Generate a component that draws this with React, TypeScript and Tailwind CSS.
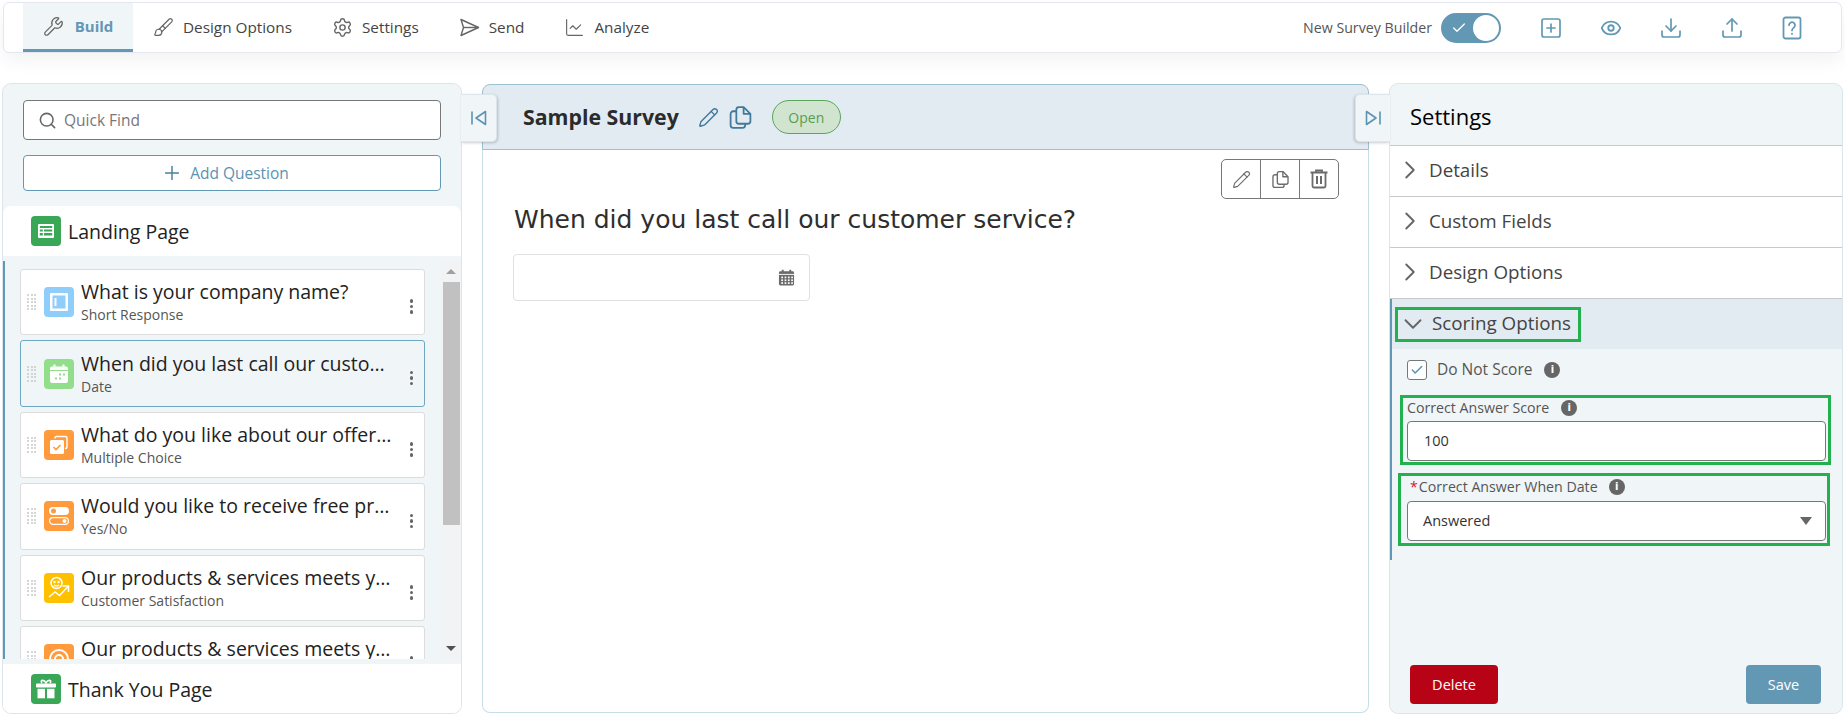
import React from 'react';
import { Wrench, Brush, Settings, LineChart, Search, Plus, SquarePlus, Eye, Download, Upload, Pencil, ChevronRight, ChevronDown, Check } from 'lucide-react';

const SendIcon = () => (
  <svg width="21" height="21" viewBox="0 0 21 21" fill="none" stroke="#666" strokeWidth="1.4" strokeLinejoin="round">
    <path d="M2 2.5 19.5 10.5 2 18.5 4.5 10.5Z" />
    <path d="M4.5 10.5H19.5" />
  </svg>
);

const HelpIcon = () => (
  <svg width="22" height="24" viewBox="0 0 22 24" fill="none" stroke="#6398b4" strokeWidth="1.8" strokeLinecap="round">
    <rect x="2.5" y="1.5" width="17" height="21" rx="2" />
    <path d="M8 9.2a3 3 0 1 1 4.8 2.4c-1.1.8-1.8 1.4-1.8 2.8" />
    <path d="M11 17.6v.4" />
  </svg>
);

const CollapseIcon = ({ flip }: { flip?: boolean }) => (
  <svg width="18" height="18" viewBox="0 0 18 18" fill="none" stroke="#5b93b1" strokeWidth="1.6" strokeLinejoin="round" className={flip ? 'scale-x-[-1]' : ''}>
    <path d="M2 2.5v13" />
    <path d="M15.5 2.5v13L6 9Z" />
  </svg>
);

const CopyIcon = ({ color, size }: { color: string; size: number }) => (
  <svg width={size} height={size} viewBox="0 0 24 24" fill="none" stroke={color} strokeWidth="1.7" strokeLinejoin="round">
    <path d="M8 6H5a2.5 2.5 0 0 0-2.5 2.5v11A2.5 2.5 0 0 0 5 22h9a2.5 2.5 0 0 0 2.5-2.5V18" />
    <path d="M8 4.5A2.5 2.5 0 0 1 10.5 2H15l6.5 6.5v7a2.5 2.5 0 0 1-2.5 2.5h-8.500A2.500 2.500 0 0 1 8 15.500Z" />
    <path d="M15 2v6.500h6.500" />
  </svg>
);

const TrashIcon = () => (
  <svg width="20" height="20" viewBox="0 0 20 20" fill="none" stroke="#6b6b6b" strokeWidth="1.8">
    <path d="M1.500 3.500h17" strokeWidth="2" />
    <path d="M7 3V1.500h6V3" />
    <path d="M3.500 4v13a1.500 1.500 0 0 0 1.500 1.500h10a1.500 1.500 0 0 0 1.500-1.500V4" />
    <path d="M8 7v8M12 7v8" strokeWidth="2" />
  </svg>
);

const CalendarFill = ({ size, color, hole }: { size: number; color: string; hole: string }) => (
  <svg width={size} height={size} viewBox="0 0 18 18">
    <rect x="1" y="2.500" width="16" height="15" rx="1.500" fill={color} />
    <rect x="4" y="0.800" width="2" height="3" fill={color} />
    <rect x="12" y="0.800" width="2" height="3" fill={color} />
    <rect x="1" y="5.200" width="16" height="1" fill={hole} />
    {[8, 11, 14].map(y => [3.5, 7, 10.5, 14].map(x => <rect key={`${x}-${y}`} x={x} y={y} width="1.800" height="1.800" fill={hole} />))}
  </svg>
);

const CalendarTile = () => (
  <svg width="20" height="20" viewBox="0 0 20 20">
    <rect x="1" y="2.500" width="18" height="16.500" rx="2" fill="white" />
    <rect x="4.500" y="0.500" width="2" height="3.500" fill="white" />
    <rect x="13.500" y="0.500" width="2" height="3.500" fill="white" />
    <rect x="1" y="6" width="18" height="1" fill="#92de8b" />
    <rect x="10" y="9.500" width="2" height="2" fill="#92de8b" />
    <rect x="14" y="9.500" width="2" height="2" fill="#92de8b" />
    <rect x="6" y="13.500" width="2" height="2" fill="#92de8b" />
    <rect x="10" y="13.500" width="2" height="2" fill="#92de8b" />
  </svg>
);

const Tile = ({ color, children }: { color: string; children: React.ReactNode }) => (
  <div className={`flex h-[30px] w-[30px] shrink-0 items-center justify-center rounded-[4px] ${color}`}>{children}</div>
);

const ShortIcon = () => (
  <svg width="20" height="20" viewBox="0 0 20 20">
    <rect x="1" y="1" width="18" height="18" rx="1" fill="white" />
    <rect x="3.500" y="3.500" width="13" height="13" fill="#8fcdfb" />
    <rect x="5.500" y="6" width="2" height="8" fill="white" />
  </svg>
);

const ChoiceIcon = () => (
  <svg width="20" height="20" viewBox="0 0 20 20" fill="none" stroke="white" strokeWidth="1.400">
    <path d="M6 3.500V3a1.500 1.500 0 0 1 1.500-1.500h9A1.500 1.500 0 0 1 18 3v9a1.500 1.500 0 0 1-1.500 1.500H16" />
    <rect x="1" y="5" width="14" height="14" rx="1.500" fill="white" stroke="none" />
    <path d="M4.500 12l2.500 2.500 4.500-4.500" stroke="#ff9a3d" strokeWidth="1.600" />
  </svg>
);

const ToggleIcon = () => (
  <svg width="22" height="20" viewBox="0 0 22 20">
    <rect x="1" y="1" width="20" height="8" rx="4" fill="white" />
    <circle cx="5.500" cy="5" r="2.500" fill="#ff9a3d" />
    <rect x="1.600" y="11.600" width="18.800" height="6.800" rx="3.400" fill="none" stroke="white" strokeWidth="1.200" />
    <circle cx="16.500" cy="15" r="2" fill="white" />
  </svg>
);

const SmileIcon = () => (
  <svg width="22" height="24" viewBox="0 0 22 24" fill="none" stroke="white" strokeWidth="1.500">
    <circle cx="8.500" cy="7" r="5.500" />
    <circle cx="6.500" cy="6" r="0.500" fill="white" />
    <circle cx="10.500" cy="6" r="0.500" fill="white" />
    <path d="M6 9c1.500 1.200 3.500 1.200 5 0" />
    <path d="M1 21l6-5 4.500 3.500L20 10.500" />
    <path d="M14.500 10h6v6" />
  </svg>
);

const TargetIcon = () => (
  <svg width="22" height="22" viewBox="0 0 22 22" fill="none" stroke="white" strokeWidth="2">
    <circle cx="11" cy="11" r="9" />
    <circle cx="11" cy="11" r="4" />
  </svg>
);

const TableIcon = () => (
  <svg width="20" height="20" viewBox="0 0 20 20">
    <rect x="2" y="3" width="16" height="14" rx="1" fill="white" />
    <rect x="3.800" y="5" width="12.400" height="2" fill="#3aa757" />
    <rect x="3.800" y="8.500" width="3" height="2" fill="#3aa757" />
    <rect x="8" y="8.500" width="8.200" height="2" fill="#3aa757" />
    <rect x="3.800" y="12" width="3" height="2.500" fill="#3aa757" />
    <rect x="8" y="12" width="8.200" height="2.500" fill="#3aa757" />
  </svg>
);

const GiftIcon = () => (
  <svg width="22" height="22" viewBox="0 0 22 22">
    <path d="M7 5c-2.500-3 2-4 4 0 2-4 6.500-3 4 0" fill="none" stroke="white" strokeWidth="1.600" />
    <rect x="1" y="5.500" width="20" height="4" rx="0.800" fill="white" />
    <rect x="2.500" y="10.800" width="7.500" height="9.500" fill="white" />
    <rect x="12" y="10.800" width="7.500" height="9.500" fill="white" />
  </svg>
);

const Info = () => (
  <span className="flex h-[16px] w-[16px] shrink-0 items-center justify-center rounded-full bg-[#666] font-['DejaVu_Sans',sans-serif] text-[10px] font-bold leading-none text-white">i</span>
);

const tabs = [
  { label: 'Design Options', icon: <Brush size={21} strokeWidth={1.4} color="#666" /> },
  { label: 'Settings', icon: <Settings size={21} strokeWidth={1.6} color="#666" /> },
  { label: 'Send', icon: <SendIcon /> },
  { label: 'Analyze', icon: <LineChart size={21} strokeWidth={1.3} color="#666" /> },
];

const questions = [
  { title: 'What is your company name?', sub: 'Short Response', tile: <Tile color="bg-[#8fcdfb]"><ShortIcon /></Tile> },
  { title: 'When did you last call our customer service?', sub: 'Date', active: true, tile: <Tile color="bg-[#92de8b]"><CalendarTile /></Tile> },
  { title: 'What do you like about our offerings?', sub: 'Multiple Choice', tile: <Tile color="bg-[#ff9a3d]"><ChoiceIcon /></Tile> },
  { title: 'Would you like to receive free products?', sub: 'Yes/No', tile: <Tile color="bg-[#ff9a3d]"><ToggleIcon /></Tile> },
  { title: 'Our products & services meets your needs', sub: 'Customer Satisfaction', tile: <Tile color="bg-[#ffc000]"><SmileIcon /></Tile> },
  { title: 'Our products & services meets your expectations', sub: 'Net Promoter Score', tile: <Tile color="bg-[#ff9a3d]"><TargetIcon /></Tile> },
];

const Grip = () => (
  <div className="grid w-[9px] shrink-0 grid-cols-3 gap-[1.500px]">
    {Array.from({ length: 15 }).map((_, i) => (
      <span key={i} className="h-[2px] w-[2px] rounded-full bg-[#c8c8c8]" />
    ))}
  </div>
);

const Dots = () => (
  <div className="mt-[9px] flex w-[25px] shrink-0 flex-col items-center gap-[2px]">
    <span className="h-[3.500px] w-[3.500px] rounded-full bg-[#666]" />
    <span className="h-[3.500px] w-[3.500px] rounded-full bg-[#666]" />
    <span className="h-[3.500px] w-[3.500px] rounded-full bg-[#666]" />
  </div>
);

const Accordion = ({ label }: { label: string }) => (
  <div className="flex h-[51px] items-center border-b border-[#c9c9c9] bg-white pb-[2px] pl-[5px] text-[18.800px] text-[#444]">
    <ChevronRight size={30} strokeWidth={1.5} color="#666" />
    <span className="ml-[4px]">{label}</span>
  </div>
);

export default function App() {
  return (
    <div className="h-[717px] w-full overflow-hidden bg-white font-['Open_Sans',sans-serif]">
      <div className="mx-[3px] mt-[2px] flex h-[51px] items-center rounded-[6px] border border-[#e4e7f0] bg-white pl-[19px] pr-[38px] shadow-[0_8px_18px_rgba(0,0,0,0.05)]">
        <div className="flex h-full w-[110px] items-center justify-center gap-[11px] border-b-[3px] border-[#6398b4] bg-[#f0f5f8]">
          <Wrench size={21} strokeWidth={1.4} color="#666" />
          <span className="text-[15px] font-bold text-[#6398b4]">Build</span>
        </div>
        {tabs.map(t => (
          <div key={t.label} className="flex h-full items-center gap-[9px] px-[20px] text-[15.300px] text-[#444]">
            {t.icon}
            <span>{t.label}</span>
          </div>
        ))}
        <div className="ml-auto flex items-center">
          <span className="text-[14.200px] text-[#555]">New Survey Builder</span>
          <div className="ml-[9px] flex h-[30px] w-[60px] items-center justify-between rounded-full border-2 border-[#6398b4] bg-[#6398b4] pl-[8px]">
            <Check size={16} strokeWidth={2} color="white" />
            <span className="h-[26px] w-[26px] rounded-full bg-white" />
          </div>
          <div className="ml-[38px] flex items-center gap-[37px]">
            <SquarePlus size={24} strokeWidth={1.7} color="#6398b4" />
            <Eye size={22} strokeWidth={2} color="#6398b4" />
            <Download size={24} strokeWidth={1.7} color="#6398b4" />
            <Upload size={24} strokeWidth={1.7} color="#6398b4" />
            <HelpIcon />
          </div>
        </div>
      </div>

      <div className="mt-[31px] flex h-[629px] gap-[21px] px-[3px]">
        {/* question list */}
        <div className="relative flex w-[458px] shrink-0 flex-col rounded-[8px] bg-[#f0f5f8] ring-1 ring-[#dde5ec]">
          <div className="px-[20px] pt-[16px]">
            <div className="flex h-[40px] items-center gap-[7px] rounded-[4px] border border-[#777] bg-white pl-[14px] text-[15.500px] text-[#777]">
              <Search size={19} strokeWidth={2} color="#666" />
              <span className="pt-[2px]">Quick Find</span>
            </div>
            <div className="mt-[15px] flex h-[36px] items-center justify-center gap-[7px] rounded-[4px] border border-[#6398b4] bg-white pr-[14px] text-[15.500px] text-[#5b93b1]">
              <Plus size={22} strokeWidth={1.6} color="#4a809e" />
              <span className="pt-[2px]">Add Question</span>
            </div>
          </div>
          <div className="mt-[15px] flex h-[50px] shrink-0 items-center gap-[7px] rounded-t-[8px] bg-white pl-[28px] text-[19.500px] text-[#222]">
            <Tile color="bg-[#3aa757]"><TableIcon /></Tile>
            <span className="pt-[2px]">Landing Page</span>
          </div>
          <div className="mt-[5px] flex h-[398px] border-l-2 border-[#6398b4]">
            <div className="flex min-w-0 flex-1 flex-col gap-[5px] overflow-hidden pl-[15px] pr-[16px] pt-[8px]">
              {questions.map(q => (
                <div
                  key={q.title}
                  className={`flex h-[66.400px] shrink-0 items-center rounded-[3px] border pl-[6px] ${q.active ? 'border-[#6fa6c2] bg-[#f0f5f8]' : 'border-[#dcdcdc] bg-white'}`}
                >
                  <Grip />
                  <div className="ml-[8px]">{q.tile}</div>
                  <div className="ml-[7px] min-w-0 flex-1 pr-[3px]">
                    <div className="truncate text-[19.500px] leading-[26px] text-[#222]">{q.title}</div>
                    <div className="text-[14px] leading-[20px] text-[#555]">{q.sub}</div>
                  </div>
                  <Dots />
                </div>
              ))}
            </div>
            <div className="flex w-[20px] shrink-0 flex-col items-center bg-[#f1f3f5]">
              <div className="flex h-[21px] items-center justify-center">
                <span className="h-0 w-0 border-x-[5px] border-b-[5px] border-x-transparent border-b-[#a0a0a0]" />
              </div>
              <div className="h-[243px] w-[17px] bg-[#c1c1c1]" />
              <div className="mt-auto flex h-[21px] items-center justify-center">
                <span className="h-0 w-0 border-x-[5px] border-t-[5px] border-x-transparent border-t-[#505050]" />
              </div>
            </div>
          </div>
          <div className="mt-auto flex h-[49px] items-center gap-[7px] rounded-b-[8px] bg-white pl-[28px] text-[19.500px] text-[#222]">
            <Tile color="bg-[#3aa757]"><GiftIcon /></Tile>
            <span className="pt-[2px]">Thank You Page</span>
          </div>
          <div className="absolute left-[458px] top-[10px] flex h-[48px] w-[36px] items-center justify-center rounded-r-[5px] border border-l-0 border-[#dde5ec] bg-[#f0f5f8] shadow-[1px_1px_3px_rgba(0,0,0,0.2)]">
            <CollapseIcon />
          </div>
        </div>

        {/* question preview */}
        <div className="flex w-[887px] shrink-0 flex-col">
          <div className="flex h-[66px] shrink-0 items-center rounded-t-[8px] border border-[#9dc0d3] bg-[#e2ebf1] pl-[40px]">
            <span className="text-[21.300px] font-bold text-[#2b2b2b]">Sample Survey</span>
            <Pencil size={21} strokeWidth={1.6} color="#3f7a9a" className="ml-[19px]" />
            <div className="ml-[9px]"><CopyIcon color="#3f7a9a" size={25} /></div>
            <span className="ml-[19px] flex h-[34px] w-[69px] items-center justify-center rounded-full border border-[#5aa65a] bg-[#d0e4d0] text-[14px] text-[#5a9c50]">Open</span>
          </div>
          <div className="flex-1 rounded-b-[8px] border-x border-b border-[#c7dde8] bg-white pl-[30px] pr-[29px] pt-[9px]">
            <div className="flex justify-end">
              <div className="flex h-[40px] divide-x divide-[#777] rounded-[5px] border border-[#777]">
                <div className="flex w-[39px] items-center justify-center"><Pencil size={19} strokeWidth={1.4} color="#6b6b6b" /></div>
                <div className="flex w-[39px] items-center justify-center"><CopyIcon color="#6b6b6b" size={19} /></div>
                <div className="flex w-[38px] items-center justify-center"><TrashIcon /></div>
              </div>
            </div>
            <div className="ml-[1px] mt-[5px] font-['DejaVu_Sans',sans-serif] text-[25px] leading-[32px] text-[#2e2e2e]">When did you last call our customer service?</div>
            <div className="mt-[18px] flex h-[47px] w-[297px] items-center justify-end rounded-[4px] border border-[#e0e0e0] pr-[14px]">
              <CalendarFill size={17} color="#6b6b6b" hole="white" />
            </div>
          </div>
        </div>

        {/* settings */}
        <div className="relative flex w-[452px] shrink-0 flex-col rounded-[8px] bg-[#f0f5f8] ring-1 ring-[#dde5ec]">
          <div className="absolute left-[-35px] top-[10px] flex h-[48px] w-[35px] items-center justify-center rounded-l-[5px] border border-r-0 border-[#dde5ec] bg-[#f0f5f8] shadow-[-1px_1px_3px_rgba(0,0,0,0.2)]">
            <CollapseIcon flip />
          </div>
          <div className="flex h-[62px] shrink-0 items-center border-b border-[#c9c9c9] pl-[20px] pt-[4px] text-[22px] text-black">Settings</div>
          <Accordion label="Details" />
          <Accordion label="Custom Fields" />
          <Accordion label="Design Options" />
          <div className="border-l-2 border-[#6398b4]">
            <div className="flex h-[50px] items-center bg-[#e2ebf1] pl-[3px]">
              <div className="flex h-[35px] w-[186px] items-center border-[3px] border-[#23b14d] text-[18.800px] text-[#444]">
                <ChevronDown size={30} strokeWidth={1.5} color="#666" />
                <span className="ml-[4px] whitespace-nowrap pb-[2px]">Scoring Options</span>
              </div>
            </div>
            <div className="pb-[14px] pt-[11px]">
              <div className="ml-[15px] flex h-[20px] items-center text-[15.500px] text-[#555]">
                <span className="flex h-[20px] w-[20px] items-center justify-center rounded-[3px] border border-[#777] bg-white">
                  <Check size={14} strokeWidth={2.6} color="#5b93b1" />
                </span>
                <span className="ml-[10px]">Do Not Score</span>
                <span className="ml-[12px]"><Info /></span>
              </div>
              <div className="ml-[8px] mt-[15px] h-[70px] w-[431px] border-[3px] border-[#23b14d] pl-[4px] pr-[2px]">
                <div className="flex h-[23px] items-center pb-[4px] text-[14.200px] text-[#555]">
                  <span>Correct Answer Score</span>
                  <span className="ml-[12px]"><Info /></span>
                </div>
                <div className="flex h-[40px] items-center rounded-[4px] border border-[#777] bg-white pl-[16px] text-[14.500px] text-[#333]">100</div>
              </div>
              <div className="ml-[6px] mt-[8px] h-[73px] w-[432px] border-[3px] border-[#23b14d] pl-[6px] pr-[1px]">
                <div className="flex h-[25px] items-center pb-[3px] text-[14.200px] text-[#555]">
                  <span className="ml-[3px] mr-[1px] text-[#d4182b]">*</span>
                  <span>Correct Answer When Date</span>
                  <span className="ml-[11px]"><Info /></span>
                </div>
                <div className="flex h-[40px] items-center justify-between rounded-[4px] border border-[#777] bg-white pl-[15px] pr-[13px] text-[14.500px] text-[#333]">
                  <span>Answered</span>
                  <span className="h-0 w-0 border-x-[6.500px] border-t-[8px] border-x-transparent border-t-[#666]" />
                </div>
              </div>
            </div>
          </div>
          <div className="mt-auto flex items-center justify-between pb-[9px] pl-[20px] pr-[21px] text-[14.500px] text-white">
            <button className="h-[39px] w-[88px] rounded-[4px] bg-[#b80316]">Delete</button>
            <button className="h-[39px] w-[75px] rounded-[4px] bg-[#6398b4]">Save</button>
          </div>
        </div>
      </div>
    </div>
  );
}
